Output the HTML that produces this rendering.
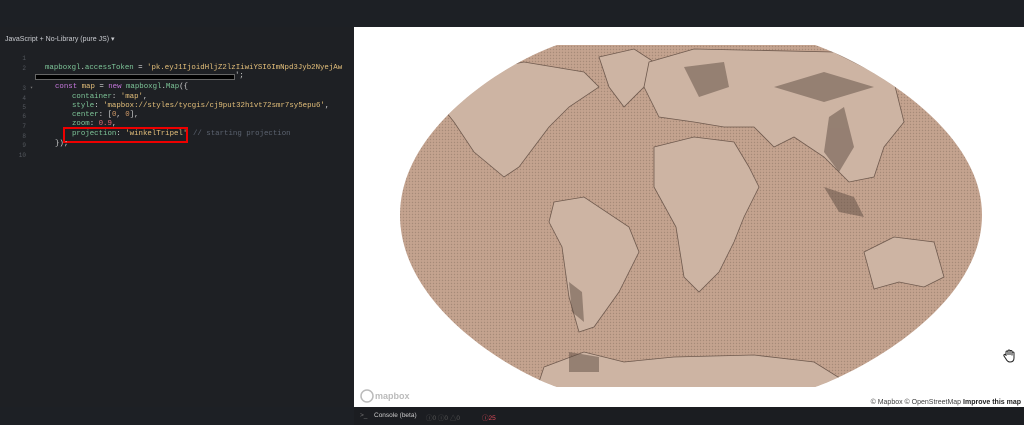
<!DOCTYPE html>
<html><head><meta charset="utf-8"><style>
*{margin:0;padding:0;box-sizing:border-box}
body{width:1024px;height:425px;overflow:hidden;background:#1d2025;font-family:"Liberation Sans",sans-serif;position:relative}
.top{position:absolute;left:0;top:0;width:1024px;height:27px;background:#1d2025}
.left{position:absolute;left:0;top:27px;width:354px;height:380px;background:#1e2024}
.hdr{position:absolute;left:5px;top:35px;font-size:7px;color:#c9cbd0}
.code{position:absolute;left:0;top:54px;font-family:"Liberation Mono",monospace;font-size:7.4px;line-height:9.5px;color:#d4d4d4;white-space:pre}
.ln{position:absolute;left:14px;width:12px;text-align:right;color:#55595f;font-size:6px}
.l{position:absolute;left:45px}
.k{color:#c678dd}.s{color:#e5c07b}.p{color:#7ec699}.v{color:#e5c07b}.n{color:#d19a66}.c{color:#5c6370}.f{color:#e06c75}
.map{position:absolute;left:354px;top:27px;width:670px;height:380px;background:#fff}
.cons{position:absolute;left:354px;top:407px;width:670px;height:18px;background:#1b1d21;font-size:6.5px;color:#aaa}
</style></head><body>
<div class="top"></div>
<div class="left"></div>
<div class="hdr">JavaScript + No-Library (pure JS) ▾</div>
<div class="code">
<div class="ln" style="top:0">1</div>
<div class="ln" style="top:10px">2</div>
<div class="l" style="top:10px"><span class="p">mapboxgl</span>.<span class="p">accessToken</span> = <span class="s">'pk.eyJ1IjoidHljZ2lzIiwiYSI6ImNpd3Jyb2NyejAw</span></div>
<div style="position:absolute;left:35px;top:20px;width:200px;height:6px;background:#000;border:1px solid #666"></div>
<div class="l" style="top:18px;left:235px">';</div>
<div class="ln" style="top:30px">3</div><div style="position:absolute;left:30px;top:30px;color:#777;font-size:5px">▾</div>
<div class="l" style="top:29px;left:55px"><span class="k">const</span> <span class="v">map</span> = <span class="k">new</span> <span class="p">mapboxgl</span>.<span class="p">Map</span>({</div>
<div class="ln" style="top:40px">4</div>
<div class="l" style="top:39px;left:72px"><span class="p">container</span>: <span class="s">'map'</span>,</div>
<div class="ln" style="top:49px">5</div>
<div class="l" style="top:48px;left:72px"><span class="p">style</span>: <span class="s">'mapbox://styles/tycgis/cj9put32h1vt72smr7sy5epu6'</span>,</div>
<div class="ln" style="top:58px">6</div>
<div class="l" style="top:57px;left:72px"><span class="p">center</span>: [<span class="n">0</span>, <span class="n">0</span>],</div>
<div class="ln" style="top:68px">7</div>
<div class="l" style="top:66px;left:72px"><span class="p">zoom</span>: <span class="f">0.9</span>,</div>
<div class="ln" style="top:78px">8</div>
<div class="l" style="top:76px;left:72px"><span class="p">projection</span>: <span class="s">'winkelTripel'</span></div>
<div class="l" style="top:76px;left:193px"><span class="c">// starting projection</span></div>
<div style="position:absolute;left:63px;top:73px;width:125px;height:16px;border:2.5px solid #e00"></div>
<div class="ln" style="top:87px">9</div>
<div class="l" style="top:86px;left:55px">});</div>
<div class="ln" style="top:97px">10</div>
</div>
<div class="map">
<svg width="670" height="380" viewBox="0 0 670 380">
<defs>
<pattern id="d" width="3" height="3" patternUnits="userSpaceOnUse"><rect width="3" height="3" fill="#c4a38f"/><circle cx="1.5" cy="1.5" r=".7" fill="#a68a78"/></pattern>
<clipPath id="cl"><path d="M203 18 L461 18 C510 35 628 100 628 188 C628 278 510 343 461 360 L203 360 C154 343 46 278 46 188 C46 100 154 35 203 18Z"/></clipPath>
</defs>
<path d="M203 18 L461 18 C510 35 628 100 628 188 C628 278 510 343 461 360 L203 360 C154 343 46 278 46 188 C46 100 154 35 203 18Z" fill="url(#d)"/>
<g clip-path="url(#cl)" fill="#cdb4a3" stroke="#6f5a4e" stroke-width="0.8">
<path d="M90 50 L170 35 L230 45 L245 60 L215 80 L195 100 L180 120 L165 140 L150 150 L120 125 L100 95 L80 70Z"/>
<path d="M245 30 L280 22 L300 35 L290 60 L270 80 L255 60Z"/>
<path d="M200 175 L230 170 L275 200 L285 225 L265 265 L240 300 L225 305 L215 270 L208 220 L195 195Z"/>
<path d="M300 120 L340 110 L380 115 L395 140 L405 160 L390 190 L380 215 L365 245 L345 265 L330 250 L322 200 L300 160Z"/>
<path d="M295 35 L340 22 L480 25 L540 55 L550 95 L530 120 L520 150 L495 155 L470 130 L440 110 L420 120 L400 100 L370 100 L340 95 L305 90 L290 60Z"/>
<path d="M510 225 L540 210 L580 215 L590 250 L570 260 L545 255 L520 262Z"/>
<path d="M190 340 L230 325 L270 335 L320 330 L400 328 L460 335 L500 360 L180 370Z"/>
</g>
<g fill="#5e4c42" opacity=".5" clip-path="url(#cl)"><path d="M475 90 L490 80 L500 120 L485 145 L470 125Z"/><path d="M470 160 L500 170 L510 190 L485 185Z"/><path d="M215 255 L228 265 L230 295 L218 285Z"/><path d="M330 40 L370 35 L375 60 L345 70Z"/><path d="M420 60 L470 45 L520 60 L470 75Z"/><path d="M215 325 L245 330 L245 345 L215 345Z"/></g>
<circle cx="13" cy="369" r="6" fill="none" stroke="#bbb" stroke-width="1.5"/>
<text x="21" y="372" font-size="9" font-weight="bold" fill="#bbb" font-family="Liberation Sans">mapbox</text>
<text x="667" y="377" font-size="7" fill="#444" text-anchor="end" font-family="Liberation Sans">© Mapbox © OpenStreetMap <tspan font-weight="bold" fill="#222">Improve this map</tspan></text>
<g transform="translate(650,323)" fill="none" stroke="#222" stroke-width="1"><path d="M2 6 V2 a1 1 0 0 1 2 0 V5 V1 a1 1 0 0 1 2 0 V5 V1.5 a1 1 0 0 1 2 0 V5.5 V3 a1 1 0 0 1 2 0 V8 c0 3 -2 4 -4 4 c-2 0 -3 -1 -4 -3 l-2 -3 a1 1 0 0 1 2 -1 z"/></g>
</svg>
</div>
<div class="cons"><span style="position:absolute;left:6px;top:5px;color:#777">&gt;_</span><span style="position:absolute;left:20px;top:5px;color:#ccc">Console (beta)</span><span style="position:absolute;left:72px;top:5px;color:#555">ⓘ0 ⓘ0 △0</span><span style="position:absolute;left:128px;top:5px;color:#e04a5a">ⓘ25</span></div>
</body></html>
